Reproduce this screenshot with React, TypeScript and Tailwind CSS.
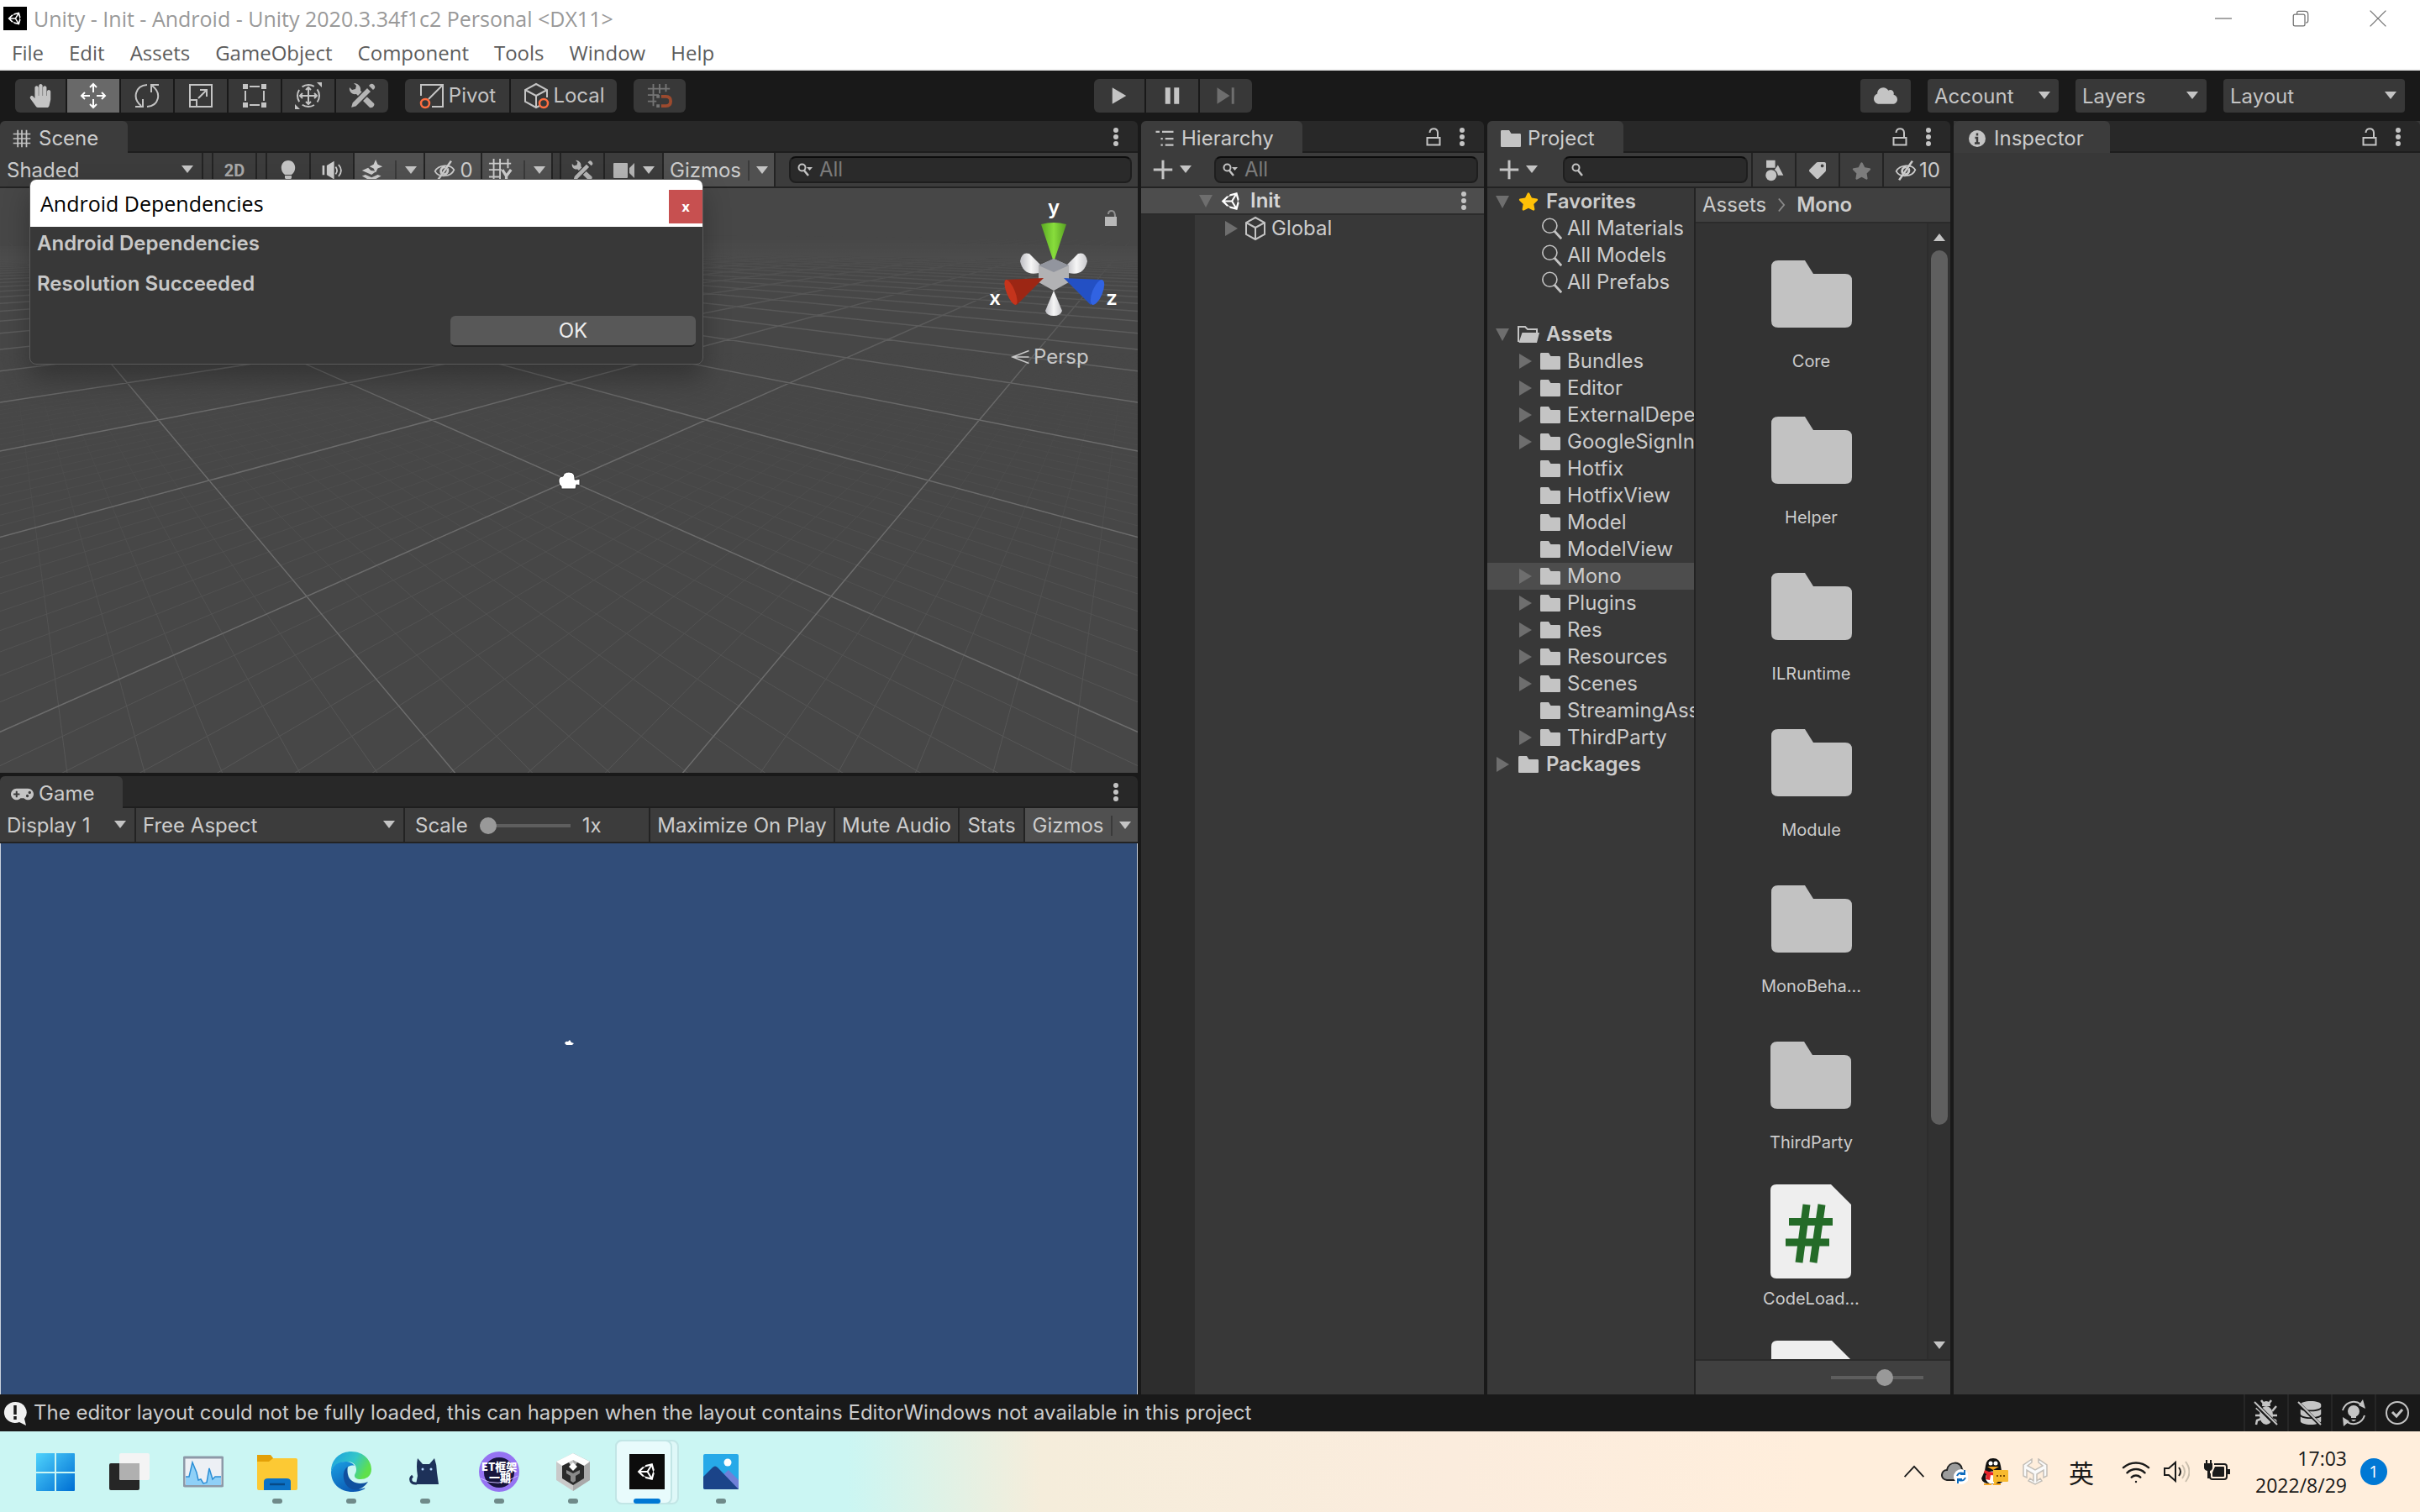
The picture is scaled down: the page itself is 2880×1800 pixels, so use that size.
import React from 'react';
import { FaUnity, FaCloud, FaDatabase, FaGamepad, FaHandPaper, FaLightbulb, FaStar, FaTag } from 'react-icons/fa';
import { Wifi } from 'lucide-react';

type Kids = { children?: React.ReactNode };

/* ---------- small shared icons ---------- */

const Svg = ({ size = 32, className = '', label, children }: Kids & { size?: number; className?: string; label?: string }) => (
    <svg
        viewBox="0 0 32 32"
        width={size}
        height={size}
        fill="none"
        stroke="currentColor"
        strokeWidth="2"
        aria-label={label}
        className={`shrink-0 ${className}`}
    >
        {children}
    </svg>
);

const Caret = ({ className = '' }: { className?: string }) => (
    <svg viewBox="0 0 14 10" width="14" height="10" className={`shrink-0 fill-[#c4c4c4] ${className}`}>
        <path d="M0 0h14L7 9z" />
    </svg>
);

const Kebab = () => (
    <svg viewBox="0 0 6 22" width="6" height="22" className="fill-[#c4c4c4]">
        <circle cx="3" cy="3" r="3" />
        <circle cx="3" cy="11" r="3" />
        <circle cx="3" cy="19" r="3" />
    </svg>
);

const Padlock = () => (
    <svg viewBox="0 0 18 22" width="18" height="22" fill="none" stroke="#c4c4c4" strokeWidth="2">
        <path d="M1.500 12h15v8.500h-15zM4.500 6c0-6.500 9.500-6.500 9.500 0v6" />
    </svg>
);

const Folder = () => (
    <svg viewBox="0 0 26 24" width="26" height="24" className="shrink-0 fill-[#c4c4c4]">
        <path d="M1 3.500C1 2.500 1.500 2 2.500 2H11l2.500 4H23.500c1 0 1.500.5 1.500 1.500V20.500c0 1-.5 1.500-1.500 1.500h-21c-1 0-1.500-.5-1.500-1.500z" />
    </svg>
);

const FolderOpen = () => (
    <svg viewBox="0 0 26 24" width="26" height="24" className="shrink-0 fill-[#c4c4c4]">
        <path d="M1 21V3h8l3 3h11v4" fill="none" stroke="#c4c4c4" strokeWidth="2" />
        <path d="M5.500 10H26l-3 12H1.500z" />
    </svg>
);

const BigFolder = () => (
    <svg viewBox="0 0 96 80" width="96" height="80" className="fill-[#c2c2c2]">
        <path d="M0 8q0-8 8-8h32l10 16h38q8 0 8 8v48q0 8-8 8H8q-8 0-8-8z" />
    </svg>
);

const ScriptFile = () => (
    <svg viewBox="0 0 96 112" width="96" height="112">
        <path d="M0 7q0-7 7-7h65l24 24v81q0 7-7 7H7q-7 0-7-7z" fill="#eeeeee" />
        <path d="M43 24L34 93M61 24L51 93M22 44.500H74M18 69H70" stroke="#246b28" strokeWidth="9" fill="none" />
    </svg>
);

const EyeOff = () => (
    <Svg size={28}>
        <path d="M3 17C8 8 24 7 29 15C25 25 8 26 3 17z" />
        <path d="M12 20c-3-5 1-9 5-9M20 13c2 5-2 9-6 8" strokeWidth="3" />
        <path d="M7 29L25 3" strokeWidth="3" />
    </Svg>
);

const ToolsIcon = ({ size = 32 }: { size?: number }) => (
    <Svg size={size} className="text-[#b4b4b4]">
        <path d="M6 1l3 3-1 4-4 1-3-3c-1 5 3 9 8 8l16 16q3 1 5-2 1-2 0-3L14 10c1-5-3-9-8-9z" fill="currentColor" stroke="none" />
        <path d="M4 24L22 6l5 5L9 29l-7 2z" fill="currentColor" stroke="#383838" strokeWidth="1.500" />
        <path d="M24 4l2-2q2-1 4 1t1 4l-2 2z" fill="currentColor" stroke="none" />
    </Svg>
);

const Search = ({ menu = false }: { menu?: boolean }) => (
    <svg viewBox="0 0 18 16" width="18" height="16" fill="none" stroke="#c4c4c4" strokeWidth="2" className="shrink-0">
        <circle cx="5.500" cy="5.500" r="4" />
        <path d="M8 9l5 6" strokeWidth="2.500" />
        {menu && <path d="M11 5h7l-3.500 4z" fill="#c4c4c4" stroke="none" />}
    </svg>
);

const GridY = () => (
    <Svg size={30}>
        <path d="M7 1v28M15 1v28M25 1v12M1 7h28M1 15h16M1 24h15" />
        <path d="M18 15l5 8 6-8M23 22v9" strokeWidth="3.500" />
    </Svg>
);

/* ---------- toolbar controls ---------- */

const ToolButton = ({ label, className = '', children }: Kids & { label: string; className?: string }) => (
    <button type="button" aria-label={label} className={`flex h-full items-center justify-center gap-1 bg-[#383838] ${className}`}>
        {children}
    </button>
);

const DropDown = ({ label, value, className = '' }: { label: string; value: string; className?: string }) => (
    <div className={`relative h-full ${className}`}>
        <select aria-label={label} defaultValue={value} className="h-full w-full appearance-none bg-transparent px-2 pt-[2px] outline-none">
            <option>{value}</option>
        </select>
        <Caret className="pointer-events-none absolute top-1/2 right-[10px] -translate-y-1/2" />
    </div>
);

const SearchBox = ({ label, placeholder, menu, className = '' }: { label: string; placeholder?: string; menu?: boolean; className?: string }) => (
    <label className={`flex h-8 min-w-0 items-center gap-2 rounded-lg border-2 border-[#1e1e1e] border-t-[#0d0d0d] bg-[#2a2a2a] px-2 ${className}`}>
        <Search menu={menu} />
        <input type="text" aria-label={label} placeholder={placeholder} className="w-full min-w-0 bg-transparent outline-none placeholder:text-[#7b7b7b]" />
    </label>
);

const Cell = ({ label, on, className = '', children }: Kids & { label: string; on?: boolean; className?: string }) => (
    <button
        type="button"
        aria-label={label}
        className={`flex h-full shrink-0 items-center justify-center pt-[2px] whitespace-nowrap ${on ? 'bg-[#505050]' : 'bg-[#3c3c3c]'} ${className}`}
    >
        {children}
    </button>
);

const Spacer = ({ className = '' }: { className?: string }) => <div className={`h-full shrink-0 bg-[#3c3c3c] ${className}`} />;

const Divider = () => <span className="h-6 w-[2px] bg-[#3a3a3a]" />;

const PanelTabs = ({ title, icon, lock, tabClass }: { title: string; icon: React.ReactNode; lock?: boolean; tabClass: string }) => (
    <div className="flex h-[38px] shrink-0 items-center rounded-t-md bg-[#282828] pr-[23px] shadow-[inset_0_-2px_0_#1e1e1e]">
        <h2 className={`flex h-full items-center gap-2 rounded-t-md bg-[#3c3c3c] pt-1 ${tabClass}`}>
            <span className="flex w-6 justify-center">{icon}</span>
            {title}
        </h2>
        <div className="ml-auto flex items-center gap-[22px]">
            {lock && <button type="button" aria-label={`Lock ${title}`}><Padlock /></button>}
            <button type="button" aria-label={`${title} menu`}><Kebab /></button>
        </div>
    </div>
);

/* ---------- scene ---------- */

// Ground plane turned 45 degrees; one unit is the gap between two bright lines.
const ground = (m: number, n: number) => {
    const depth = 1 + 0.3143 * (m + n);
    return [677 + (214 * (m - n)) / depth, 348 - (94.6 * (m + n)) / depth];
};

const gridPath = (step: number, from: number, to: number, far: number) => {
    let d = '';
    for (let i = from; i <= to; i++) {
        const k = i * step;
        const near = -2.6 - k;
        const a = ground(k, near);
        const b = ground(k, far);
        d += `M${a[0].toFixed(1)} ${a[1].toFixed(1)}L${b[0].toFixed(1)} ${b[1].toFixed(1)}`;
        d += `M${(1354 - a[0]).toFixed(1)} ${a[1].toFixed(1)}L${(1354 - b[0]).toFixed(1)} ${b[1].toFixed(1)}`;
    }
    return d;
};

const MAJOR = gridPath(1, -12, 40, 60);
const MINOR = gridPath(0.1, -60, 70, 14);

const SceneGrid = () => (
    <svg viewBox="0 0 1354 696" preserveAspectRatio="xMidYMid slice" className="absolute inset-0 h-full w-full">
        <defs>
            <linearGradient id="farFade" x1="0" y1="0" x2="0" y2="1">
                <stop offset="0.08" stopColor="#fff" stopOpacity="0" />
                <stop offset="0.2" stopColor="#fff" stopOpacity="0.45" />
                <stop offset="0.4" stopColor="#fff" stopOpacity="1" />
            </linearGradient>
            <linearGradient id="nearFade" x1="0" y1="0" x2="0" y2="1">
                <stop offset="0.28" stopColor="#fff" stopOpacity="0" />
                <stop offset="0.6" stopColor="#fff" stopOpacity="0.5" />
                <stop offset="1" stopColor="#fff" stopOpacity="1" />
            </linearGradient>
            <mask id="farMask"><rect width="1354" height="696" fill="url(#farFade)" /></mask>
            <mask id="nearMask"><rect width="1354" height="696" fill="url(#nearFade)" /></mask>
        </defs>
        <g mask="url(#nearMask)"><path d={MINOR} stroke="#585858" strokeWidth="1" fill="none" /></g>
        <g mask="url(#farMask)"><path d={MAJOR} stroke="#6c6c6c" strokeWidth="1.500" fill="none" /></g>
        <path
            d="M665 350q-1-7 5-7 1-5 7-5 7 0 7 7v2h2l4-1v8l-4-1-1 5h-17v-3q-3-2-3-5z"
            fill="#fff"
            stroke="#333"
            strokeWidth="1"
        />
    </svg>
);

const AxisGizmo = () => (
    <svg viewBox="0 0 170 160" width="170" height="160" role="img" aria-label="Scene axes" className="overflow-visible">
        <defs>
            <linearGradient id="coneY"><stop offset="0" stopColor="#5aa823" /><stop offset="0.5" stopColor="#88dd3c" /><stop offset="1" stopColor="#58a023" /></linearGradient>
            <linearGradient id="coneW"><stop offset="0" stopColor="#bcbcc2" /><stop offset="0.5" stopColor="#f6f6f6" /><stop offset="1" stopColor="#c8c8cc" /></linearGradient>
        </defs>
        <path d="M69 32Q84 28 99 32L85 74h-2z" fill="url(#coneY)" />
        <path d="M44 76Q46 64 55 67L70 82 66 90Q48 94 44 76z" fill="url(#coneW)" />
        <path d="M124 76Q122 64 113 67L98 82 102 90Q120 94 124 76z" fill="url(#coneW)" />
        <path d="M84 73l18 8v20l-18 10-18-10V81z" fill="#b2b2b4" />
        <path d="M84 73l18 8-18 8-18-8z" fill="#92959e" />
        <path d="M26 98L72 96 40 128z" fill="#9c2614" />
        <ellipse cx="33" cy="113" rx="5" ry="16" transform="rotate(-22 33 113)" fill="#c5341c" />
        <path d="M142 98L96 96 128 128z" fill="#2350c4" />
        <ellipse cx="136" cy="113" rx="6" ry="16" transform="rotate(22 136 113)" fill="#3163e2" />
        <path d="M84 111L94 135Q92 141 84 141T74 135z" fill="url(#coneW)" />
        <g fill="#fff" fontFamily="Inter, sans-serif" fontSize="24" fontWeight="600" textAnchor="middle">
            <text x="84" y="20">y</text>
            <text x="14" y="128">x</text>
            <text x="153" y="128">z</text>
        </g>
        <path d="M145 23h14v11h-14z" fill="#b8b8b8" />
        <path d="M149 20q0-4 4-4 4 0 4 7" fill="none" stroke="#909090" strokeWidth="2" />
    </svg>
);

const ScenePanel = () => (
    <section className="flex min-h-0 flex-[776] flex-col">
        <PanelTabs
            title="Scene"
            tabClass="w-[152px] pl-[14px]"
            icon={<Svg size={22} className="text-[#c4c4c4]"><path d="M9 1v30M16 1v30M24 1v30M1 8h30M1 16h30M1 24h30" strokeWidth="2.500" /></Svg>}
        />
        <div className="flex h-[42px] shrink-0 gap-[2px] border-b-2 border-[#232323] bg-[#232323]">
            <DropDown label="Draw mode" value="Shaded" className="w-60 bg-[#3c3c3c]" />
            <Spacer className="w-[10px]" />
            <Cell label="2D" className="w-[50px] font-[Roboto] text-xl font-bold text-[#a8a8a8]">2D</Cell>
            <Spacer className="w-[10px]" />
            <Cell label="Lighting" className="w-[50px]">
                <svg viewBox="0 0 18 24" width="18" height="24" className="fill-[#c4c4c4]"><path d="M5 17C-2 12 0 0 9 0s11 12 4 17zM5 18h8v3q-4 5-8 0z" /></svg>
            </Cell>
            <Cell label="Audio" className="w-[50px]">
                <Svg size={28}><path d="M3 9h3v13H3zM9 9l10-6v25L9 22z" fill="currentColor" stroke="none" /><path d="M21 11q4 5 0 10M25 8q7 8 0 16" /></Svg>
            </Cell>
            <Cell label="Effects" on className="w-[82px] gap-[14px]">
                <Svg size={26}><path d="M1 24l5-2 9 4 9-4 5 2-14 8zM1 16l9-4 4 4 8 1-7 5z" fill="currentColor" stroke="none" /><path d="M21 0l3 7 7 3-7 3-3 6-3-6-6-3 6-3z" fill="currentColor" stroke="none" /></Svg>
                <span className="flex items-center gap-[10px]"><Divider /><Caret /></span>
            </Cell>
            <Cell label="Hidden objects" on className="w-[66px] gap-1"><EyeOff />0</Cell>
            <Cell label="Grid" on className="w-[82px] gap-3"><GridY /><span className="flex items-center gap-[10px]"><Divider /><Caret /></span></Cell>
            <Spacer className="w-2" />
            <Cell label="Component tools" className="w-[50px]"><ToolsIcon size={26} /></Cell>
            <Cell label="Camera" className="w-[68px] gap-2">
                <svg viewBox="0 0 28 20" width="28" height="20" className="fill-[#b4b4b4]"><path d="M1 2q0-1 1-1h15q1 0 1 1v16q0 1-1 1H2q-1 0-1-1zM20 7l6-6v18l-6-6z" /></svg>
                <Caret />
            </Cell>
            <Cell label="Gizmos" on className="w-[131px] gap-2">Gizmos<Divider /><Caret /></Cell>
            <div className="flex min-w-0 flex-1 items-center bg-[#3c3c3c] pr-[7px] pl-4">
                <SearchBox label="Search scene" placeholder="All" menu className="flex-1" />
            </div>
        </div>
        <div className="relative min-h-0 flex-1 overflow-hidden bg-[#474747]">
            <SceneGrid />
            <div className="absolute top-[11px] right-[14px] flex w-[170px] flex-col gap-[14px]">
                <AxisGizmo />
                <button type="button" className="flex items-center gap-1 pl-8 text-[#c8c8c8]">
                    <Svg size={24}><path d="M30 6L4 16l26 10M6 16h24" /></Svg>
                    Persp
                </button>
            </div>
        </div>
    </section>
);

/* ---------- game ---------- */

const rangeTrack = 'appearance-none bg-transparent [&::-webkit-slider-runnable-track]:h-1 [&::-webkit-slider-runnable-track]:bg-[#5e5e5e] [&::-webkit-slider-thumb]:-mt-2 [&::-webkit-slider-thumb]:size-5 [&::-webkit-slider-thumb]:appearance-none [&::-webkit-slider-thumb]:rounded-full [&::-webkit-slider-thumb]:bg-[#999999]';

const GamePanel = () => (
    <section className="flex min-h-0 flex-[736] flex-col">
        <PanelTabs title="Game" tabClass="w-[146px] pl-[14px]" icon={<FaGamepad size={27} className="shrink-0 text-[#c4c4c4]" />} />
        <div className="flex h-[42px] shrink-0 gap-[2px] border-b-2 border-[#232323] bg-[#232323]">
            <DropDown label="Display" value="Display 1" className="w-40 bg-[#3c3c3c]" />
            <DropDown label="Aspect" value="Free Aspect" className="w-[318px] bg-[#3c3c3c]" />
            <label className="flex w-[290px] items-center gap-[14px] bg-[#3c3c3c] px-3 pt-[2px]">
                Scale
                <input type="range" defaultValue={0} className={`w-[108px] ${rangeTrack}`} />
                <span>1x</span>
            </label>
            <Cell label="Maximize On Play" className="w-[218px]">Maximize On Play</Cell>
            <Cell label="Mute Audio" className="w-[146px]">Mute Audio</Cell>
            <Cell label="Stats" className="w-[76px]">Stats</Cell>
            <Cell label="Gizmos" on className="flex-1 gap-2">Gizmos<Divider /><Caret /></Cell>
        </div>
        <div className="min-h-0 flex-1 border-x border-[#c8d0dc] bg-[#314d79]">
            <svg viewBox="0 0 1352 656" preserveAspectRatio="xMidYMid slice" className="h-full w-full">
                <path d="M671 238q1-3 4-2l2-2 2 3 3 1-2 2h-7z" fill="#fff" />
            </svg>
        </div>
    </section>
);

/* ---------- hierarchy ---------- */

const Fold = ({ open }: { open?: boolean }) => (
    <svg viewBox="0 0 20 20" width="20" height="20" className="shrink-0 fill-[#6e6e6e]">
        {open ? <path d="M2 3h16l-8 15z" /> : <path d="M3 1l15 9-15 9z" />}
    </svg>
);

const AddButton = () => (
    <button type="button" aria-label="Create" className="flex items-center gap-2">
        <Svg size={24} className="text-[#c4c4c4]"><path d="M16 1v30M1 16h30" strokeWidth="4" /></Svg>
        <Caret />
    </button>
);

const HierarchyPanel = () => (
    <section className="flex min-h-0 min-w-0 flex-col">
        <PanelTabs
            title="Hierarchy"
            lock
            tabClass="w-48 pl-4"
            icon={<Svg size={24} className="text-[#c4c4c4]"><path d="M2 5h6M12 5h18M10 16h3M17 16h13M10 26h3M17 26h13" strokeWidth="3" /></Svg>}
        />
        <div className="flex h-[42px] shrink-0 items-center gap-[27px] border-b-2 border-[#232323] bg-[#3c3c3c] pr-[7px] pl-[14px]">
            <AddButton />
            <SearchBox label="Search hierarchy" placeholder="All" menu className="flex-1" />
        </div>
        <div className="flex h-8 shrink-0 items-center gap-2 border-b-2 border-[#2b2b2b] bg-[#4d4d4d] pr-[21px] pl-[67px] font-semibold text-[#d6d6d6]">
            <Fold open />
            <FaUnity size={25} className="text-white" />
            <span className="pl-[2px]">Init</span>
            <button type="button" aria-label="Init menu" className="ml-auto"><Kebab /></button>
        </div>
        <div className="flex min-h-0 flex-1">
            <div className="w-16 bg-[#2d2d2d]" />
            <div className="flex-1 bg-[#383838]">
                <div className="flex h-8 items-center gap-[3px] pl-[33px]">
                    <Fold />
                    <Svg size={32} className="text-[#c4c4c4]"><path d="M16 3l11 6v14l-11 6-11-6V9zM5 9l11 6 11-6M16 15v14" /></Svg>
                    Global
                </div>
            </div>
        </div>
    </section>
);

/* ---------- project ---------- */

const FAVORITES = ['All Materials', 'All Models', 'All Prefabs'];

const FOLDERS = [
    { name: 'Bundles', fold: true },
    { name: 'Editor', fold: true },
    { name: 'ExternalDepe', fold: true },
    { name: 'GoogleSignIn', fold: true },
    { name: 'Hotfix', fold: false },
    { name: 'HotfixView', fold: false },
    { name: 'Model', fold: false },
    { name: 'ModelView', fold: false },
    { name: 'Mono', fold: true },
    { name: 'Plugins', fold: true },
    { name: 'Res', fold: true },
    { name: 'Resources', fold: true },
    { name: 'Scenes', fold: true },
    { name: 'StreamingAss', fold: false },
    { name: 'ThirdParty', fold: true },
];

const CONTENT = ['Core', 'Helper', 'ILRuntime', 'Module', 'MonoBeha...', 'ThirdParty'];

const TreeRoot = ({ name, open, icon }: { name: string; open?: boolean; icon: React.ReactNode }) => (
    <li className="flex h-8 items-center gap-2 pl-2 font-semibold">
        <Fold open={open} />
        <span className="flex w-[26px] justify-center">{icon}</span>
        {name}
    </li>
);

const ProjectPanel = () => (
    <section className="flex min-h-0 min-w-0 flex-col">
        <PanelTabs title="Project" lock tabClass="w-[162px] pl-4" icon={<Folder />} />
        <div className="flex h-[42px] shrink-0 gap-[2px] border-b-2 border-[#232323] bg-[#232323]">
            <div className="flex min-w-0 flex-1 items-center gap-[30px] bg-[#3c3c3c] pr-1 pl-[14px]">
                <AddButton />
                <SearchBox label="Search project" className="flex-1" />
            </div>
            <Cell label="Search by type" className="w-[50px]">
                <Svg size={26} className="text-[#c4c4c4]"><g fill="currentColor" stroke="none"><path d="M5 1h13v11H5z" /><circle cx="12" cy="23" r="8" /><path d="M22 8l8 15h-8q-1-6-5-8z" /></g></Svg>
            </Cell>
            <Cell label="Search by label" className="w-[50px]"><FaTag size={20} className="-scale-x-100 text-[#c4c4c4]" /></Cell>
            <Cell label="Save search" className="w-[50px]"><FaStar size={23} className="text-[#7c7c7c]" /></Cell>
            <Cell label="Hidden packages" className="w-[79px] gap-[2px]"><EyeOff />10</Cell>
        </div>
        <div className="flex min-h-0 flex-1">
            <ul className="w-[246px] shrink-0 overflow-hidden bg-[#383838] whitespace-nowrap">
                <TreeRoot name="Favorites" open icon={<FaStar size={24} className="text-[#ffc107]" />} />
                {FAVORITES.map((name) => (
                    <li key={name} className="flex h-8 items-center gap-[6px] pl-[63px]">
                        <Svg size={26} className="text-[#c4c4c4]"><circle cx="14" cy="12" r="10.500" /><path d="M21 20l10 11" strokeWidth="3.500" /></Svg>
                        {name}
                    </li>
                ))}
                <li className="h-[30px]" />
                <TreeRoot name="Assets" open icon={<FolderOpen />} />
                {FOLDERS.map(({ name, fold }) => (
                    <li key={name} className={`flex h-8 items-center gap-[7px] pl-[35px] ${name === 'Mono' ? 'bg-[#4d4d4d]' : ''}`}>
                        {fold ? <Fold /> : <span className="w-5 shrink-0" />}
                        <Folder />
                        {name}
                    </li>
                ))}
                <TreeRoot name="Packages" icon={<Folder />} />
            </ul>
            <div className="flex min-h-0 min-w-0 flex-1 flex-col border-l-2 border-[#232323]">
                <nav className="flex h-[42px] shrink-0 items-center gap-2 border-b-2 border-[#2b2b2b] bg-[#404040] px-2">
                    <a href="#assets">Assets</a>
                    <Svg size={20} className="text-[#8a8a8a]"><path d="M11 4l10 12-10 12" strokeWidth="3" /></Svg>
                    <a href="#mono" className="font-semibold">Mono</a>
                </nav>
                <div className="flex min-h-0 flex-1 bg-[#333333]">
                    <ul className="flex min-h-0 flex-1 flex-col items-center gap-[26px] overflow-hidden pt-5 text-xl leading-8">
                        {CONTENT.map((name) => (
                            <li key={name} className="flex shrink-0 flex-col items-center">
                                <span className="flex h-32 items-center"><BigFolder /></span>
                                {name}
                            </li>
                        ))}
                        <li className="flex shrink-0 flex-col items-center">
                            <span className="flex h-32 items-center"><ScriptFile /></span>
                            CodeLoad...
                        </li>
                        <li className="flex h-32 shrink-0 items-center"><ScriptFile /></li>
                    </ul>
                    <div className="flex w-7 flex-col items-center border-l-2 border-[#2d2d2d] bg-[#313131]">
                        <div className="flex h-8 shrink-0 items-center"><Caret className="rotate-180" /></div>
                        <div className="w-5 flex-[1041] rounded-full bg-[#5f5f5f]" />
                        <div className="flex-[247]" />
                        <div className="flex h-8 shrink-0 items-center"><Caret /></div>
                    </div>
                </div>
                <div className="flex h-[42px] shrink-0 items-center justify-end border-t-2 border-[#2b2b2b] bg-[#404040] pr-8">
                    <input type="range" aria-label="Icon size" defaultValue={60} className={`w-[110px] ${rangeTrack}`} />
                </div>
            </div>
        </div>
    </section>
);

const InspectorPanel = () => (
    <section className="flex min-h-0 min-w-0 flex-col bg-[#383838]">
        <PanelTabs
            title="Inspector"
            lock
            tabClass="w-[186px] pl-4"
            icon={
                <svg viewBox="0 0 20 20" width="20" height="20">
                    <circle cx="10" cy="10" r="10" fill="#c4c4c4" />
                    <path d="M10 3.500v3M7.500 9H10v7M7 15.500h6" stroke="#3c3c3c" strokeWidth="2.500" fill="none" />
                </svg>
            }
        />
    </section>
);

/* ---------- window chrome ---------- */

const MENUS = ['File', 'Edit', 'Assets', 'GameObject', 'Component', 'Tools', 'Window', 'Help'];

const TitleBar = () => (
    <header className="flex h-[84px] shrink-0 flex-col border-b-2 border-[#f0f0f0] bg-white font-['Open_Sans',sans-serif] text-[#5c5c5c]">
        <div className="flex h-11 shrink-0 items-center pl-1 text-[25px] text-[#999999]">
            <span className="flex size-7 items-center justify-center bg-black"><FaUnity size={18} className="text-white" /></span>
            <h1 className="pl-2">{'Unity - Init - Android - Unity 2020.3.34f1c2 Personal <DX11>'}</h1>
            <div className="ml-auto flex h-full items-center pr-1 text-[#707070]">
                <button type="button" aria-label="Minimize" className="flex w-[92px] justify-center">
                    <Svg size={20}><path d="M0 16h32" /></Svg>
                </button>
                <button type="button" aria-label="Restore" className="flex w-[92px] justify-center">
                    <Svg size={20}><rect x="2" y="8" width="22" height="22" rx="3" /><path d="M9 8V5q0-3 3-3h12q6 0 6 6v12q0 4-4 4" /></Svg>
                </button>
                <button type="button" aria-label="Close" className="flex w-[92px] justify-center">
                    <Svg size={20}><path d="M1 1l30 30M31 1L1 31" /></Svg>
                </button>
            </div>
        </div>
        <nav className="flex flex-1 items-center gap-[30px] pl-[14px] leading-9">
            {MENUS.map((m) => (
                <button type="button" key={m}>{m}</button>
            ))}
        </nav>
    </header>
);

const MainToolbar = () => (
    <div className="grid h-[60px] shrink-0 grid-cols-[1fr_auto_1fr] items-center bg-[#191919] px-[18px] text-[#c4c4c4]">
        <div className="flex h-10 items-center">
            <div className="flex h-full gap-[2px] overflow-hidden rounded-md">
                <ToolButton label="Hand" className="w-[60px]"><FaHandPaper size={28} /></ToolButton>
                <ToolButton label="Move" className="w-[62px] bg-[#696969] text-white">
                    <Svg size={32}><path d="M16 2v10M16 20v10M2 16h10M20 16h10M12 6l4-4 4 4M12 26l4 4 4-4M6 12l-4 4 4 4M26 12l4 4-4 4" /></Svg>
                </ToolButton>
                <ToolButton label="Rotate" className="w-[62px]">
                    <Svg size={32}><path d="M16 3C2 4-2 19 9 28M2 29h9v-9M16 29C30 28 34 13 22 4M30 3h-9v9" /></Svg>
                </ToolButton>
                <ToolButton label="Scale" className="w-[62px]">
                    <Svg size={32}><path d="M3 3h26v26H3zM3 21h8v8M13 19L23 9M15 9h8v8" /></Svg>
                </ToolButton>
                <ToolButton label="Rect" className="w-[62px]">
                    <Svg size={32}><path d="M10 5h12M10 27h12M5 10v12M27 10v12" /><path d="M2 2h6v6H2zM24 2h6v6h-6zM2 24h6v6H2zM24 24h6v6h-6z" fill="currentColor" stroke="none" /></Svg>
                </ToolButton>
                <ToolButton label="Transform" className="w-[62px]">
                    <Svg size={32}><circle cx="16" cy="16" r="13" strokeDasharray="15 5" strokeDashoffset="7" /><path d="M16 6v20M6 16h20M13 9l3-3 3 3M13 23l3 3 3-3M9 13l-3 3 3 3M23 13l3 3-3 3" /><path d="M26 0h6v6zM0 26v6h6z" fill="currentColor" stroke="none" /></Svg>
                </ToolButton>
                <ToolButton label="Custom tools" className="w-[62px]"><ToolsIcon /></ToolButton>
            </div>
            <div className="ml-5 flex h-full gap-[2px] overflow-hidden rounded-md">
                <ToolButton label="Pivot" className="w-[124px]">
                    <Svg size={32}><path d="M3 16V3h26v26H16M12 20L28 4" /><circle cx="8" cy="25" r="5" stroke="#ff6e40" strokeWidth="2.500" /></Svg>
                    Pivot
                </ToolButton>
                <ToolButton label="Local" className="w-[126px]">
                    <Svg size={32}><path d="M20 28l-4 2-13-7V9l13-7 13 7v9M3 9l13 7 13-7M16 16v13" /><circle cx="25" cy="25" r="5" stroke="#ff6e40" strokeWidth="2.500" /></Svg>
                    Local
                </ToolButton>
            </div>
            <ToolButton label="Grid snapping" className="ml-5 w-[62px] rounded-md bg-[#242424]">
                <Svg size={30} className="text-[#747474]">
                    <path d="M8 1v28M16 1v12M24 1v10M1 7h28M1 15h14M1 23h11" />
                    <path d="M18 17h6q6 0 6 6t-6 6h-6" stroke="#9c4a2e" strokeWidth="4" />
                    <path d="M14 15v4M14 27v4" strokeWidth="4" />
                </Svg>
            </ToolButton>
        </div>
        <div className="mr-[88px] flex h-10 gap-[2px] overflow-hidden rounded-md">
            <ToolButton label="Play" className="w-[60px]"><Svg size={24}><path d="M5 3l22 13L5 29z" fill="currentColor" stroke="none" /></Svg></ToolButton>
            <ToolButton label="Pause" className="w-[62px]"><Svg size={24}><path d="M9 3v26M23 3v26" strokeWidth="8" /></Svg></ToolButton>
            <ToolButton label="Step" className="w-[62px] bg-[#282828] text-[#6e6e6e]"><Svg size={24}><path d="M2 3l20 13L2 29z" fill="currentColor" stroke="none" /><path d="M27 3v26" strokeWidth="4" /></Svg></ToolButton>
        </div>
        <div className="flex h-10 justify-end gap-5">
            <ToolButton label="Cloud" className="w-[60px] rounded-sm"><FaCloud size={28} /></ToolButton>
            <DropDown label="Account" value="Account" className="w-[156px] rounded-sm bg-[#383838]" />
            <DropDown label="Layers" value="Layers" className="w-[156px] rounded-sm bg-[#383838]" />
            <DropDown label="Layout" value="Layout" className="w-[216px] rounded-sm bg-[#383838]" />
        </div>
    </div>
);

const StatusCell = ({ label, children }: Kids & { label: string }) => (
    <button type="button" aria-label={label} className="flex h-full w-[52px] items-center justify-center border-l-2 border-[#262626] text-[#c4c4c4]">
        {children}
    </button>
);

const StatusBar = () => (
    <footer className="flex h-11 shrink-0 items-center bg-[#191919] pl-[2px]">
        <Svg size={32} className="text-[#f0f0f0]">
            <path d="M16 3a13 12.500 0 1 0 5 24l8 4-2-8A13 12.500 0 0 0 16 3z" fill="currentColor" stroke="none" />
            <path d="M16 7v11M16 20v4" stroke="#191919" strokeWidth="3.500" />
        </Svg>
        <p className="pl-[6px] whitespace-nowrap">The editor layout could not be fully loaded, this can happen when the layout contains EditorWindows not available in this project</p>
        <div className="ml-auto flex h-full pr-[2px]">
            <StatusCell label="Debugger">
                <Svg size={32}>
                    <ellipse cx="16" cy="19" rx="8" ry="11" fill="currentColor" stroke="none" />
                    <path d="M11 8q0-6 5-6t5 6z" fill="currentColor" stroke="none" />
                    <path d="M4 10l6 5M3 19h7M4 30l1-5 5-2M28 8l-5 6M29 19h-7M28 30l-1-5-5-2M13 5l-3-4M19 5l3-4" strokeWidth="2.500" />
                    <path d="M3 5l26 26" stroke="#191919" strokeWidth="5" /><path d="M2 3l27 27" />
                </Svg>
            </StatusCell>
            <StatusCell label="Cache server">
                <Svg size={32}>
                    <FaDatabase size={28} x="3" y="2" stroke="none" />
                    <path d="M3 5l26 26" stroke="#191919" strokeWidth="4" /><path d="M2 3l27 27" />
                </Svg>
            </StatusCell>
            <StatusCell label="Auto lighting">
                <Svg size={32}>
                    <circle cx="16" cy="14" r="7" fill="currentColor" stroke="none" />
                    <path d="M13 19h6v3h-6zM13 24h6q-3 4-6 0z" fill="currentColor" stroke="none" />
                    <path d="M3 13C6 3 17 0 25 6M29 19C26 29 15 32 7 26" />
                    <path d="M27 0l3 11-8-4zM4 32L3 21l8 5z" fill="currentColor" stroke="none" />
                </Svg>
            </StatusCell>
            <StatusCell label="Activity">
                <Svg size={32}><circle cx="16" cy="16" r="13" /><path d="M10 15l5 5 7-8" strokeWidth="3" /></Svg>
            </StatusCell>
        </div>
    </footer>
);

/* ---------- dialog ---------- */

const DependencyDialog = () => (
    <div role="dialog" aria-labelledby="dialog-title" className="absolute top-[213px] left-[35px] flex h-[221px] w-[802px] flex-col overflow-hidden rounded-lg border border-[#5a5a5a] bg-[#383838] shadow-[0_16px_32px_rgba(0,0,0,0.28)]">
        <div className="flex h-14 shrink-0 items-end justify-between bg-white pb-1 pl-3 font-['Open_Sans',sans-serif] text-[25px] text-black">
            <h2 id="dialog-title" className="pb-2">Android Dependencies</h2>
            <button type="button" aria-label="Close dialog" className="flex size-10 items-center justify-center bg-[#c75050] text-base font-bold text-white">x</button>
        </div>
        <div className="flex flex-1 flex-col px-2 pt-1 pb-5 font-semibold text-[#c8c8c8]">
            <p className="leading-8">Android Dependencies</p>
            <p className="pt-4 leading-8">Resolution Succeeded</p>
            <button type="button" className="mt-auto h-[37px] w-[292px] shrink-0 self-end rounded-md border-b-2 border-[#242424] bg-[#585858] font-normal text-[#eeeeee]">OK</button>
        </div>
    </div>
);

/* ---------- taskbar ---------- */

const Art = ({ children }: Kids) => <svg viewBox="0 0 48 48" width="48" height="48">{children}</svg>;

const APPS = [
    {
        name: 'Start', dot: false, art: (
            <Art>
                <defs><linearGradient id="win" x2="1" y2="1" gradientUnits="userSpaceOnUse" gradientTransform="scale(46)"><stop stopColor="#52d6fd" /><stop offset="1" stopColor="#0070d4" /></linearGradient></defs>
                <path d="M1 3q0-1 1-1h21v22H1zM25 2h21q1 0 1 1v21H25zM1 26h22v21H2q-1 0-1-1zM25 26h22v20q0 1-1 1H25z" fill="url(#win)" />
            </Art>
        ),
    },
    {
        name: 'Task view', dot: false, art: (
            <Art>
                <rect x="0" y="14" width="36" height="32" rx="2" fill="#262626" />
                <rect x="12" y="2" width="36" height="32" rx="2" fill="#f4f4f4" />
                <path d="M12 14h24v20H14q-2 0-2-2z" fill="#b0b0b0" />
            </Art>
        ),
    },
    {
        name: 'Resource monitor', dot: false, art: (
            <Art>
                <rect x="1" y="7" width="46" height="34" rx="1" fill="#edf0f5" stroke="#8d99a8" strokeWidth="3" />
                <path d="M3 30h4l4-17 5 12 2 9 3-1 3 5 4-1 3-17 4 13 3-3h7v10H3z" fill="#8fd0f7" />
                <path d="M3 30h4l4-17 5 12 2 9 3-1 3 5 4-1 3-17 4 13 3-3h7" fill="none" stroke="#2c8fd6" strokeWidth="1.500" />
            </Art>
        ),
    },
    {
        name: 'File Explorer', dot: true, art: (
            <Art>
                <path d="M0 4h16l4 5v7H0z" fill="#e3a008" />
                <path d="M0 12h14l5-4h27q2 0 2 2v34q0 2-2 2H2q-2 0-2-2z" fill="#fcc934" />
                <path d="M8 46V36q0-4 5-4h22q5 0 5 4v10z" fill="#0c72c6" />
                <path d="M15 39h18" stroke="#074a86" strokeWidth="2.500" />
            </Art>
        ),
    },
    {
        name: 'Edge', dot: true, art: (
            <Art>
                <defs>
                    <linearGradient id="edgeTop" x2="1" y2="0.4"><stop stopColor="#1b9de2" /><stop offset="0.6" stopColor="#33c6c9" /><stop offset="1" stopColor="#5fe04b" /></linearGradient>
                    <linearGradient id="edgeLow" x2="0.6" y2="1"><stop stopColor="#1ba0e2" /><stop offset="1" stopColor="#0a59b4" /></linearGradient>
                </defs>
                <path d="M0 24C0 8 12 0 24 0c15 0 24 11 24 21 0 9-7 12-13 12-5 0-7-2-7-4 0-3 2-3 2-8 0-6-5-9-11-9C9 12 2 17 0 24z" fill="url(#edgeTop)" />
                <path d="M0 24c2-8 9-12 17-12 5 0 9 2 11 5-7-2-12 4-12 11 0 8 8 20 22 16 3-1 3 0 1 1-4 2-8 3-13 3C10 48 0 38 0 24z" fill="url(#edgeLow)" />
                <path d="M20 18c-6 3-8 16 0 24 8 7 18 3 24-6-9 4-22 2-24-9q-1-5 0-9z" fill="#10509f" />
            </Art>
        ),
    },
    {
        name: 'Clash', dot: true, art: (
            <Art>
                <path d="M15 8l6 7h8l6-7q3 8 3 17l2 14H13l2-10q-2-12 0-21z" fill="#1d3159" />
                <path d="M14 38c-8 1-9-6-5-9" fill="none" stroke="#1d3159" strokeWidth="3" />
                <circle cx="21" cy="21" r="1.500" fill="#b4d8ff" /><circle cx="31" cy="21" r="1.500" fill="#b4d8ff" />
            </Art>
        ),
    },
    {
        name: 'ET', dot: true, art: (
            <Art>
                <circle cx="24" cy="24" r="24" fill="#9573f2" />
                <circle cx="24" cy="25" r="18" fill="#17143c" />
                <path d="M2 32q20 12 44-3" fill="none" stroke="#c9b8ff" strokeWidth="1" />
                <g fill="#fff" fontFamily="'Noto Sans CJK SC', sans-serif" fontWeight="900" fontSize="13" textAnchor="middle">
                    <text x="24" y="23">ET框架</text>
                    <text x="25" y="36">一期</text>
                </g>
            </Art>
        ),
    },
    {
        name: 'Unity Hub', dot: true, art: (
            <Art>
                <path d="M24 2l20 10v22L24 47 4 34V12z" fill="#c9c9c9" />
                <path d="M24 2l20 10v22L24 47z" fill="#a9a9a9" />
                <path d="M24 2l20 10-7 5-13-7-13 7-7-5z" fill="#fff" />
                <path d="M11 17l8-4 5 8 5-8 8 4v15l-13 8-13-8z" fill="#2a2a2a" />
                <path d="M24 13l5 5-5 5-5-5z" fill="#fff" />
                <path d="M16 22l8 4 8-4v4l-5 3v6l-3 2-3-2v-6l-5-3z" fill="#8a8a8a" />
            </Art>
        ),
    },
    {
        name: 'Unity', dot: false, art: (
            <span className="flex size-[42px] items-center justify-center bg-[#0c0c0c]"><FaUnity size={24} className="text-white" /></span>
        ),
    },
    {
        name: 'Photos', dot: true, art: (
            <Art>
                <rect x="3" y="3" width="42" height="42" rx="2" fill="#27a9e8" />
                <path d="M24 30l9-8 12 12v11H24z" fill="#6f80d8" />
                <path d="M3 30l11-11q3-3 6 0l25 26H5q-2 0-2-2z" fill="#1b4489" />
                <circle cx="32" cy="13" r="4.500" fill="#fff" />
            </Art>
        ),
    },
];

const TrayButton = ({ label, children }: Kids & { label: string }) => (
    <button type="button" aria-label={label} className="flex w-12 items-center justify-center">{children}</button>
);

const Taskbar = () => (
    <div className="flex h-24 shrink-0 items-center bg-[linear-gradient(to_right,#cbf6f3_0%,#cbf6f3_35%,#e0f2e6_39%,#f5eddb_43%,#fbecdd_60%,#ffeedc_75%,#ffeedc_100%)] pr-[39px] pl-[22px] font-['Open_Sans',sans-serif] text-[#1a1a1a]">
        {APPS.map(({ name, dot, art }) => (
            <button type="button" key={name} aria-label={name} className="relative flex h-24 w-[88px] items-center justify-center">
                {name === 'Unity' && (
                    <>
                        <span className="absolute h-[77px] w-[76px] rounded-lg border-2 border-[#c2e6e6] bg-[#dff8f8]" />
                        <span className="absolute left-[6px] h-[77px] w-[68px] rounded-lg border-2 border-[#c2e6e6] bg-[#e8fbfc]" />
                        <span className="absolute bottom-[10px] h-[6px] w-8 rounded-full bg-[#0078d4]" />
                    </>
                )}
                <span className="relative">{art}</span>
                {dot && <span className="absolute bottom-[10px] h-[6px] w-3 rounded-full bg-[#6f8a89]" />}
            </button>
        ))}
        <div className="ml-auto flex items-center">
            <TrayButton label="Show hidden icons"><Svg size={28}><path d="M3 23L16 9l13 14" /></Svg></TrayButton>
            <TrayButton label="OneDrive">
                <Svg size={32}>
                    <path d="M7 26C-2 25 0 14 7 14 9 3 24 3 25 13l3 4-4 9z" fill="#9c9c9c" stroke="#222" />
                    <circle cx="24" cy="22" r="9" fill="#fff" stroke="none" />
                    <path d="M19 21q2-5 8-3M29 23q-2 5-8 3M28 14v5h-5M20 30v-5h5" stroke="#0f6cbd" />
                </Svg>
            </TrayButton>
            <TrayButton label="QQ">
                <Svg size={32}>
                    <g stroke="none">
                        <path d="M5 9Q6 0 14 0t9 9l1 6 3 8q0 8-13 8T0 24l4-9z" fill="#111" />
                        <ellipse cx="13" cy="23" rx="8" ry="7.500" fill="#fff" />
                        <circle cx="11" cy="6" r="2.500" fill="#fff" /><circle cx="17" cy="6" r="2.500" fill="#fff" />
                        <path d="M7 10h14l-7 4z" fill="#f5a623" />
                        <path d="M4 14q10 5 19 0v4q-8 3-12 2l-1 6-5-1 1-6-3-2z" fill="#e5242a" />
                        <path d="M3 30h9v2H3zM14 30h9v2h-9z" fill="#f5a623" />
                        <path d="M14 14h17q1 0 1 1v12q0 1-1 1H20l-5 4v-4h-1z" fill="#f7b92e" />
                        <path d="M18 20h2v2h-2zM22 20h2v2h-2zM26 20h2v2h-2z" fill="#7a4b00" />
                    </g>
                </Svg>
            </TrayButton>
            <TrayButton label="Unity Hub tray">
                <Svg size={32} className="text-[#c4bfb8]">
                    <path d="M12 1L2 8v13l4 2v-9l8 5v8l-4-3-2 3 8 4 8-4-2-3-4 3v-8l8-5v9l4-2V8L20 1v4l5 4-9 5-9-5 5-4z" fill="#fafafa" strokeWidth="1.500" />
                </Svg>
            </TrayButton>
            <button type="button" className="w-[62px] text-center font-['Noto_Sans_CJK_SC',sans-serif] text-[30px] leading-9">英</button>
            <div className="ml-[10px] flex items-center">
                <TrayButton label="Network"><Wifi size={36} strokeWidth={1.600} /></TrayButton>
                <TrayButton label="Volume">
                    <Svg size={32}><path d="M2 12h5l8-7v22l-8-7H2z" /><path d="M19 11q4 5 0 10" /><path d="M23 8q6 8 0 16M27 4q9 12 0 24" stroke="#cbbfae" /></Svg>
                </TrayButton>
                <TrayButton label="Battery">
                    <Svg size={32}>
                        <path d="M13 7h12q3 0 3 3v12q0 3-3 3H11q-3 0-3-3v-4" />
                        <path d="M14 10h10q1 0 1 1v10q0 1-1 1H12q-1 0-1-1v-4zM29 13h3v6h-3zM1 6h2V2h2v4h3V2h2v4h1v5q0 3-3 4v9H5v-9q-4-1-4-4z" fill="currentColor" stroke="none" />
                    </Svg>
                </TrayButton>
            </div>
            <button type="button" className="w-[131px] text-right text-[23px] leading-8">17:03<br />2022/8/29</button>
            <span className="ml-4 flex size-8 items-center justify-center rounded-full bg-[#0078d4] text-xl text-white">1</span>
        </div>
    </div>
);

const App = () => {
    return (
        <div className="relative flex h-screen flex-col overflow-hidden bg-[#191919] font-[Inter,sans-serif] text-2xl leading-8 text-[#cccccc]">
            <TitleBar />
            <MainToolbar />
            <main className="grid min-h-0 flex-1 grid-cols-[minmax(0,1354fr)_minmax(0,408fr)_minmax(0,551fr)_minmax(0,555fr)] gap-1">
                <div className="flex min-h-0 min-w-0 flex-col gap-1">
                    <ScenePanel />
                    <GamePanel />
                </div>
                <HierarchyPanel />
                <ProjectPanel />
                <InspectorPanel />
            </main>
            <StatusBar />
            <Taskbar />
            <DependencyDialog />
        </div>
    );
};

export default App;
